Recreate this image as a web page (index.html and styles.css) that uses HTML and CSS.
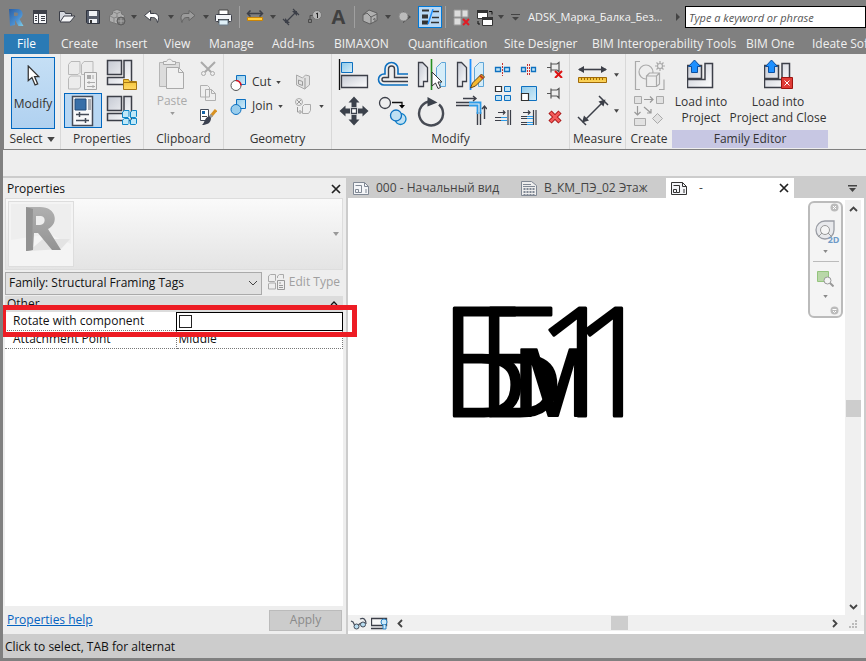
FILE: index.html
```
<!DOCTYPE html>
<html lang="en">
<head>
<meta charset="utf-8">
<title>ADSK_Марка_Балка_Без...</title>
<link rel="stylesheet" href="styles.css">
</head>
<body>
<svg class="defs" aria-hidden="true">
  <defs>
    <linearGradient id="steel" x1="0" y1="0" x2="1" y2="1"><stop offset="0" stop-color="#c5c9d3"/><stop offset="1" stop-color="#fff"/></linearGradient>
    <linearGradient id="sky" x1="0" y1="0" x2="1" y2="1"><stop offset="0" stop-color="#8fcaea"/><stop offset="1" stop-color="#d5edf9"/></linearGradient>
    <linearGradient id="rblue" x1="0" y1="0" x2="1" y2="1"><stop offset="0" stop-color="#2a5fa5"/><stop offset=".6" stop-color="#4b8fd0"/><stop offset="1" stop-color="#7fd0e8"/></linearGradient>
    <linearGradient id="rgray" x1="0" y1="0" x2="0" y2="1"><stop offset="0" stop-color="#b0b0b0"/><stop offset="1" stop-color="#929292"/></linearGradient>
    <linearGradient id="gold" x1="0" y1="0" x2="0" y2="1"><stop offset="0" stop-color="#f0c030"/><stop offset="1" stop-color="#ffd866"/></linearGradient>
    <symbol id="down" viewBox="0 0 6 4"><path d="M0 0h6L3 4z"/></symbol>
    <symbol id="sheet" viewBox="0 0 17 15"><path d="M.500 1.500h11l4 4v8H.500z" fill="#f4f5f8" stroke="currentColor"/><path d="M11.500 1.500v4h4M2.500 4.500h6v7M2.500 8.500h3v3h-3zM5.500 11.500h3M13 8v4" fill="none" stroke="currentColor"/></symbol>
    <symbol id="load" viewBox="688 60 28 30"><path d="M688.500 66.500h14v13h-14zM706 64.500h7.500v24h-25v-8H706z" fill="url(#steel)" stroke="#3c3f48" stroke-width="1.500"/><path d="M695.500 61l6 6.500h-3v6h-6v-6h-3z" fill="#1e90ff" stroke="#0b4fa0"/></symbol>
    <symbol id="cursor" viewBox="0 0 12 20"><path d="M1 1v14l3.500-3 3 7 2.500-1-3-7H11z" fill="#fff" stroke="#333" stroke-width="1.200"/></symbol>
  </defs>
</svg>
<div class="app">
  <header class="titlebar">
    <svg width="16" height="19" viewBox="9 7 16 19"><path d="M10 8h8c7 0 7 8 2.500 10l4 7h-5l-3.500-6v5l-5 1z" fill="url(#rblue)"/><path d="M15 11.500h2.500c2 0 2 3.500 0 3.500H15z" fill="#808080"/></svg>
    <button aria-label="Home"><svg width="16" height="16" viewBox="32 9 16 16"><path d="M33.500 10.500h13v13h-13z" fill="#f5f6f8" stroke="#3c3f48"/><path d="M33 10h14v4H33z" fill="#3c3f48"/><path d="M35 16.500h2m-2 2h2m-2 2h2M38.500 14v9M41 16.500h4m-4 2h4m-4 2h4" stroke="#3c3f48"/></svg></button>
    <button aria-label="Open"><svg width="18" height="14" viewBox="60 10 18 14"><path d="M61.500 21V11.500h5l1 2h6v3" fill="#d5d8df" stroke="#3c3f48"/><path d="M62 22l4-6h11l-5 6z" fill="#f5f6f8" stroke="#3c3f48"/></svg></button>
    <button aria-label="Save"><svg width="16" height="16" viewBox="85 8 16 16"><path d="M86.500 9.500h13v13h-12l-1-1z" fill="#555c6a" stroke="#30343e"/><path d="M89 10h8v5h-8zM89 18h8v4h-8z" fill="#eef1f5"/><path d="M90 19h2v3h-2z" fill="#333"/></svg></button>
    <button aria-label="Sync"><svg width="18" height="17" viewBox="108 8 18 17"><path d="M109.500 14.500l3-1.500v-3l4.500-1.500 4.500 1.500v3l3 1.500v5l-6 4-9-3z" fill="#aeaeae" stroke="#757575"/><path d="M112.500 10.500l4.500 2 4.500-2M117 12.500v4m-7-1.500l4 2 3-1 4 2 3-2M114 17v5" fill="none" stroke="#858585"/><circle cx="121" cy="20" r="4" fill="#777" stroke="#5d5d5d"/><path d="M118 20h6m-3-3v6" stroke="#aaa"/></svg></button>
    <svg class="dd" width="6" height="4"><use href="#down"/></svg>
    <button aria-label="Undo"><svg width="16" height="14" viewBox="145 10 16 14"><path d="M145.500 15.500l6-5v3h4c4 0 5 4 3 9-1-4-2.500-5-5-5h-2v3z" fill="#fff" stroke="#3c3f48"/></svg></button>
    <svg class="dd" width="6" height="4"><use href="#down"/></svg>
    <button aria-label="Redo"><svg width="16" height="14" viewBox="181 10 16 14"><path d="M196 15.500l-6-5v3h-4c-4 0-5 4-3 9 1-4 2.500-5 5-5h2v3z" fill="#9b9b9b" stroke="#646464"/></svg></button>
    <svg class="dd" width="6" height="4"><use href="#down"/></svg>
    <button aria-label="Print"><svg width="17" height="17" viewBox="217 9 17 17"><path d="M221 10h9v5h-9z" fill="#fff" stroke="#444"/><rect x="217.500" y="14.500" width="16" height="7" rx="1" fill="#f2f4f7" stroke="#3c3f48"/><path d="M220 19h11v4h-11z" fill="#333"/><path d="M221 20h9v5h-9z" fill="#dff0f8" stroke="#6b7a88"/></svg></button>
    <i class="sep"></i>
    <button aria-label="Measure"><svg width="18" height="14" viewBox="247 11 18 14"><path d="M249 14.500h14M251.500 11.500l-3 3 3 3m9-6l3 3-3 3" fill="none" stroke="#3c3f48" stroke-width="1.500"/><path d="M248.500 18.500h15v3h-15z" fill="#ffcb3c" stroke="#c98408"/></svg></button>
    <svg class="dd" width="6" height="4"><use href="#down"/></svg>
    <button aria-label="Dimension"><svg width="18" height="18" viewBox="283 8 18 18"><path d="M287 22l10-10M284 19l6 6M294 9l6 6" stroke="#3c3f48" stroke-width="1.200"/><path d="M286 23v-5l5 5zM298 11v5l-5-5z" fill="#3c3f48"/></svg></button>
    <button aria-label="Tag"><svg width="16" height="14" viewBox="308 10 16 14"><circle cx="318" cy="15" r="4.500" fill="#b5b5b5" stroke="#757575"/><path d="M313.500 15.500h-2.500v4M309.500 19.500h3v3h-3z" fill="none" stroke="#4c4c4c"/><path d="M317 14l1.500-1v5" fill="none" stroke="#222"/></svg></button>
    <button class="letter" aria-label="Text">A</button>
    <i class="sep"></i>
    <button aria-label="3D view"><svg width="16" height="16" viewBox="363 9 16 16"><path d="M364 14.500l6-4.500 8 3v7.500l-7 3.500-7-3z" fill="#b0b0b0" stroke="#606060"/><path d="M364 15l4-2 4 4v7m0-7l6-3M374 19.500l2-1v3" fill="none" stroke="#606060"/></svg></button>
    <svg class="dd" width="6" height="4"><use href="#down"/></svg>
    <svg width="14" height="14" viewBox="399 10 14 14"><path d="M404 11l8 6-8 6z" fill="#4a4a4a"/><circle cx="404.500" cy="16.500" r="4.500" fill="#bbb" stroke="#8a8a8a"/></svg>
    <button class="toggled" aria-label="Thin lines"><svg width="18" height="16" viewBox="422 9 18 16"><path d="M423 10.500h7" stroke="#333" stroke-width="2"/><path d="M423 16.500h6m-6 6h6" stroke="#333" stroke-width="4"/><path d="M434 11.500h6m-7 6h7m-8 5h8" stroke="#333" stroke-width="1.500"/><path d="M434 9l-5 15" stroke="#1e90ff" stroke-width="1.500"/></svg></button>
    <i class="sep"></i>
    <button aria-label="Close inactive"><svg width="17" height="17" viewBox="454 8 17 17"><path d="M455 9h7v7h-7zm8 0h6v7h-6zm-8 8h7v7h-7z" fill="#ddd" stroke="#999"/><path d="M464 18l6 6m0-6l-6 6" stroke="#e01b24" stroke-width="2"/></svg></button>
    <button aria-label="Switch windows"><svg width="17" height="17" viewBox="478 8 17 17"><path d="M478.500 9.500h10v8h-10z" fill="#fff" stroke="#333"/><path d="M478 9h11v3h-11z" fill="#333"/><path d="M483.500 16.500h10v8h-10z" fill="#fff" stroke="#333"/><path d="M483 16h11v3h-11z" fill="#333"/><path d="M490 10.500h3v3M481 23h-2v-3" fill="none" stroke="#111"/></svg></button>
    <svg class="dd" width="6" height="4"><use href="#down"/></svg>
    <svg class="dd" width="9" height="8" viewBox="0 0 9 8"><path d="M0 1h9v1H0zM1 4h7L4.500 7.500z"/></svg>
    <span class="doc">ADSK_Марка_Балка_Без...</span>
    <svg class="dd" width="4" height="8" viewBox="0 0 4 8"><path d="M0 0l4 4-4 4z"/></svg>
    <input class="search" type="text" placeholder="Type a keyword or phrase" aria-label="Search">
  </header>

  <nav class="tabs">
    <a class="file" href="#">File</a><a href="#">Create</a><a href="#">Insert</a><a href="#">View</a><a href="#">Manage</a><a href="#">Add-Ins</a><a href="#">BIMAXON</a><a href="#">Quantification</a><a href="#">Site Designer</a><a href="#">BIM Interoperability Tools</a><a href="#">BIM One</a><a href="#">Ideate Software</a>
  </nav>

  <section class="ribbon">
    <div class="panel">
      <div class="body"><button class="modify"><svg width="13" height="21"><use href="#cursor"/></svg>Modify</button></div>
      <h2>Select <svg class="dd" width="8" height="5" viewBox="0 0 6 4"><path d="M0 0h6L3 4z"/></svg></h2>
    </div>
    <div class="panel">
      <div class="body pairs">
        <button aria-label="Type properties"><svg width="32" height="32" viewBox="66 58 32 32"><g fill="#ececec" stroke="#b9b9b9"><path d="M68.500 63.500l2.500-3h9v11l-2 2h-9.500zM81.500 63.500l2.500-3h9v11l-2 2h-9.500zM68.500 77.500l2-2.500h10v11l-2 2h-10z"/><path d="M84.500 71.500h12v17h-12z" fill="#f0f0f0" stroke="#a5a5a5"/></g><path d="M87 74h4v4h-4z" fill="#aaa"/><path d="M93 74v4M87 81.500h8m-8 4h8M89 80v3m4 1v3" stroke="#aaa"/></svg></button>
        <button aria-label="Family category"><svg width="32" height="32" viewBox="106 58 32 32"><path d="M107.500 59.500h14v14h-14zM124 59.500h7.500v24h-24v-7H124z" fill="url(#steel)" stroke="#3c3f48" stroke-width="1.500"/><path d="M123.500 88.500v-10h5l1 2h7v8z" fill="url(#gold)" stroke="#a87813"/><path d="M124 81.500h12" stroke="#a87813"/></svg></button>
        <button class="chosen" aria-label="Properties"><svg width="24" height="32" viewBox="70 94 24 32"><path d="M71.500 95.500h20v29h-20z" fill="#f8f9fb" stroke="#444b58" stroke-width="1.500"/><path d="M74 98h11v11H74z" fill="#386fa8" stroke="#234c7b"/><path d="M87 98h3v11h-3z" fill="#a9acb3"/><path d="M75 113.500h13m-13 6h13M78.500 111v5m6 1v5" stroke="#444b58" stroke-width="1.500"/></svg></button>
        <button aria-label="Family types"><svg width="32" height="32" viewBox="106 95 32 32"><path d="M107.500 96.500h14v14h-14zM124 96.500h7.500v24h-24v-7H124z" fill="url(#steel)" stroke="#3c3f48" stroke-width="1.500"/><path d="M122.500 112l2-1.500h4.500v6l-1 1h-5.500zM130.500 112l2-1.500h4v6l-1 1h-5zM122.500 120l2-1.500h4.500v5l-1 1h-5.500zM130.500 120l2-1.500h4v5l-1 1h-5z" fill="#bfe8f8" stroke="#0c86c8"/></svg></button>
      </div>
      <h2>Properties</h2>
    </div>
    <div class="panel">
      <div class="body clip">
        <button class="paste"><svg width="28" height="32" viewBox="158 59 28 32"><path d="M159.500 63.500h20v24h-20z" fill="#dcdcdc" stroke="#b5b5b5"/><path d="M163.500 65.500v-3h3c1-3 5-3 6 0h3v3z" fill="#ededed" stroke="#aaa"/><path d="M166.500 68.500h12l5 5v16h-17z" fill="#f0f0f0" stroke="#aaa"/><path d="M178.500 68.500v5h5" fill="none" stroke="#aaa"/></svg>Paste<svg class="dd" width="5" height="3"><use href="#down"/></svg></button>
        <div class="smalls">
          <button aria-label="Cut"><svg width="16" height="16" viewBox="201 61 16 16"><path d="M202 62l10 10M216 62l-10 10" stroke="#aaa" stroke-width="2"/><circle cx="204.500" cy="73.500" r="2" fill="none" stroke="#aaa"/><circle cx="213.500" cy="73.500" r="2" fill="none" stroke="#aaa"/></svg></button>
          <button aria-label="Copy"><svg width="16" height="16" viewBox="201 85 16 16"><path d="M201.500 85.500h7l2 2V97h-9zM206.500 89.500h6l4 4v7h-10z" fill="#eee" stroke="#b0b0b0"/><path d="M212.500 89.500v4h4" fill="none" stroke="#b0b0b0"/></svg></button>
          <button aria-label="Match type"><svg width="17" height="17" viewBox="201 109 17 17"><path d="M201.500 109.500h8v11h-8z" fill="#fff" stroke="#444b58"/><path d="M203 111h3v3h-3z" fill="#1764a5"/><path d="M203 116.500h5" stroke="#444"/><path d="M217 110l-5 6" stroke="#d89122" stroke-width="3"/><path d="M213 115l-3 3" stroke="#999" stroke-width="3"/><path d="M210 116l2 2c0 5-4 7-9 7 3-2 2-7 7-9z" fill="#3b4150"/></svg></button>
        </div>
      </div>
      <h2>Clipboard</h2>
    </div>
    <div class="panel">
      <div class="body geo">
        <button class="wide"><svg width="17" height="17" viewBox="230 73 17 17"><path d="M236.500 74.500h9v9h-9z" fill="url(#sky)" stroke="#0d70c0"/><circle cx="236" cy="84.500" r="5" fill="#fff" stroke="#555"/><path d="M236 79.500a5 5 0 0 1 5 5" fill="none" stroke="#e01020" stroke-width="1.500"/></svg>Cut<svg class="dd" width="5" height="3"><use href="#down"/></svg></button>
        <button class="cope" aria-label="Cope"><svg width="16" height="17" viewBox="296 73 16 17"><path d="M297.500 74l6 3 3-3 4 1v9l-5 4-8-4z" fill="#e2e2e2" stroke="#aaa"/><path d="M306 77v11M299.500 79l4 1.500v4l-4-1.500z" fill="none" stroke="#999"/></svg></button>
        <button class="wide"><svg width="17" height="17" viewBox="230 97 17 17"><path d="M236.500 98.500h9v9h-9z" fill="url(#sky)" stroke="#0d70c0"/><circle cx="236" cy="108.500" r="5" fill="#99cdec" stroke="#0d70c0"/></svg>Join<svg class="dd" width="5" height="3"><use href="#down"/></svg></button>
        <button class="walls" aria-label="Wall joins"><svg width="16" height="17" viewBox="296 97 16 17"><circle cx="300" cy="101" r="3.500" fill="none" stroke="#aaa"/><path d="M298 99l4 4m0-4l-4 4M298.500 106v5h3m-1-2l2 2-2 2" fill="none" stroke="#999"/><path d="M303.500 105.500l2-2h6v6l-2 3h-6z" fill="#eee" stroke="#aaa"/></svg><svg class="dd" width="5" height="3"><use href="#down"/></svg></button>
      </div>
      <h2>Geometry</h2>
    </div>
    <div class="panel">
      <div class="body mod">
        <div class="big">
          <button aria-label="Align"><svg width="32" height="32" viewBox="338 59 32 32"><path d="M339.500 59v31" stroke="#111" stroke-width="1.300"/><path d="M341.500 62.500h11v10h-11z" fill="url(#sky)" stroke="#0d70c0"/><path d="M341.500 75.500h26v12h-26z" fill="url(#steel)" stroke="#3c3f48" stroke-width="1.300"/></svg></button>
          <button aria-label="Offset"><svg width="32" height="32" viewBox="377 59 32 32"><path d="M408 74h-10v-5a6.500 6.500 0 0 0-13 0v5h-1a5.500 5.500 0 0 0 0 11h24" fill="none" stroke="#0d70c0" stroke-width="1.600"/><path d="M408 77.500h-13.500V69a3 3 0 0 0-6 0v8.500H384a2 2 0 0 0 0 4h24" fill="none" stroke="#3c3f48" stroke-width="1.400"/></svg></button>
          <button aria-label="Mirror pick axis"><svg width="32" height="32" viewBox="416 59 32 32"><path d="M418.500 62.500h4l5 5v14h-4v5h-5z" fill="url(#steel)" stroke="#3c3f48" stroke-width="1.300"/><path d="M445.500 62.500h-4l-5 5v14h4v5h5z" fill="#d5edf9" stroke="#5fa6d8"/><path d="M431.500 59v31" stroke="#279020" stroke-width="1.600"/><path d="M432 72v14l3.500-3 2.500 5.500 2.500-1-2.500-5.500h4z" fill="#fff" stroke="#333"/></svg></button>
          <button aria-label="Mirror draw axis"><svg width="32" height="32" viewBox="455 59 32 32"><path d="M457.500 62.500h4l5 5v14h-4v5h-5z" fill="url(#steel)" stroke="#3c3f48" stroke-width="1.300"/><path d="M483.500 62.500h-4l-5 5v14h4v5h5z" fill="#d5edf9" stroke="#5fa6d8"/><path d="M470.500 59v31" stroke="#1e90ff" stroke-width="1.800"/><path d="M470.500 88l2-5 9-9 3 3-9 9z" fill="#f5b82e" stroke="#5b431d"/><path d="M480 75.500l3 3" stroke="#c23b1d" stroke-width="2"/></svg></button>
          <button aria-label="Move"><svg width="32" height="32" viewBox="338 94 32 32"><path d="M354 95.500l5.500 6h-3v4.500h-5v-4.500h-3zM354 124.500l5.500-6h-3V114h-5v4.500h-3zM339.500 110l6-5.500v3h4.500v5h-4.500v3zM368.500 110l-6-5.500v3H358v5h4.500v3z" fill="#3b414b"/><path d="M351.500 107.500h5v5h-5z" fill="#fff" stroke="#3b414b" stroke-width="1.300"/></svg></button>
          <button aria-label="Copy element"><svg width="32" height="32" viewBox="377 94 32 32"><circle cx="385" cy="102" r="5.500" fill="#eee" stroke="#3c3f48" stroke-width="1.300"/><path d="M392 101.500h10v3" fill="none" stroke="#111" stroke-width="1.300"/><path d="M399 104h6l-3 3.500z"/><circle cx="400.500" cy="118" r="5.500" fill="#bfe0f3" stroke="#0d80c8" stroke-width="1.300"/><circle cx="396" cy="114.500" r="5.500" fill="#bfe0f3" stroke="#0d70c0" stroke-width="1.300"/></svg></button>
          <button aria-label="Rotate"><svg width="32" height="32" viewBox="416 94 32 32"><path d="M431 100.500a12 12 0 1 0 8 3" fill="none" stroke="#474b54" stroke-width="2.400"/><path d="M427.500 96l10 5.500-10 4z" fill="#3b414b"/></svg></button>
          <button aria-label="Trim corner"><svg width="32" height="32" viewBox="455 95 32 32"><path d="M456 102.500h13m-13 3h13M477.500 112v13m3-13v13" stroke="#3c3f48" stroke-width="1.400"/><path d="M469 102.500h11.500V114M469 105.500h8.500v8.500" fill="none" stroke="#2d9be8" stroke-width="1.800"/><path d="M463 98.500h13m-3-2.500l3 2.500-3 2.500M484.500 119v-13m-2.500 3l2.500-3 2.500 3" fill="none" stroke="#3c3f48" stroke-width="1.400"/></svg></button>
        </div>
        <div class="tiny">
          <button aria-label="Split"><svg width="18" height="16" viewBox="496 61 18 16"><path d="M497.500 67.500h5v4h-5zM506.500 67.500h5v4h-5z" fill="#bfe3f5" stroke="#0d70c0" stroke-width="1.300"/><path d="M504.500 63v13" stroke="#c23030" stroke-dasharray="2 1"/></svg></button>
          <button aria-label="Split with gap"><svg width="18" height="16" viewBox="521 61 18 16"><path d="M522.500 67.500h4v4h-4zM532.500 67.500h4v4h-4z" fill="#bfe3f5" stroke="#0d70c0" stroke-width="1.300"/><path d="M528.500 64v11m2-11v11" stroke="#c23030" stroke-dasharray="2 1"/></svg></button>
          <button aria-label="Unpin"><svg width="18" height="17" viewBox="547 60 18 17"><path d="M548 66.500h4m0-5v10m0-8.500h6l2-1.500v9.500l-2-2h-6" fill="none" stroke="#555" stroke-width="1.200"/><path d="M556 70l7 7m0-7l-7 7" stroke="#d11" stroke-width="2"/></svg></button>
          <button aria-label="Array"><svg width="18" height="17" viewBox="496 85 18 17"><path d="M497.500 86.500h6v5h-6z" fill="#fff" stroke="#333" stroke-width="1.200"/><path d="M506.500 86.500h6v5h-6zM497.500 95.500h6v5h-6zM506.500 95.500h6v5h-6z" fill="#bfe3f5" stroke="#0d70c0"/></svg></button>
          <button aria-label="Scale"><svg width="18" height="17" viewBox="521 85 18 17"><path d="M522.500 86.500h15v14h-15z" fill="url(#sky)" stroke="#0d70c0"/><path d="M522.500 93.500h7v7h-7z" fill="#fff" stroke="#333" stroke-width="1.200"/></svg></button>
          <button aria-label="Pin"><svg width="18" height="16" viewBox="547 85 18 16"><path d="M548 93.500h4m0-5v10m0-8.500h6l2-1.500v9.500l-2-2h-6" fill="none" stroke="#555" stroke-width="1.200"/></svg></button>
          <button aria-label="Trim single"><svg width="18" height="17" viewBox="496 109 18 17"><path d="M500 112.500h7m-2-2l2 2-2 2M510 110v15m2.500-15v15M497 117.500h7m-7 3h7" fill="none" stroke="#3c3f48" stroke-width="1.200"/><path d="M503 117.500h6m-6 3h6" stroke="#2d9be8"/></svg></button>
          <button aria-label="Trim multiple"><svg width="18" height="17" viewBox="521 109 18 17"><path d="M524 112.500h7m-2-2l2 2-2 2M534.500 110v15m2.500-15v15M522 116.500h6m-6 2h6m-6 4h6m-6 2h6" fill="none" stroke="#3c3f48" stroke-width="1.200"/><path d="M528 116.500h6m-6 2h6m-6 4h6m-6 2h6" stroke="#2d9be8"/></svg></button>
          <button aria-label="Delete"><svg width="16" height="16" viewBox="547 109 16 16"><path d="M550 112l10 10m0-10l-10 10" stroke="#a51212" stroke-width="4.500"/><path d="M550.500 112.500l9 9m0-9l-9 9" stroke="#f35b5b" stroke-width="2.500"/></svg></button>
        </div>
      </div>
      <h2>Modify</h2>
    </div>
    <div class="panel">
      <div class="body meas">
        <button aria-label="Measure distance"><svg width="32" height="30" viewBox="576 60 32 30"><path d="M578 69.500h27" stroke="#3c3f48" stroke-width="1.600"/><path d="M577 69.500l6-3.500v7zM606 69.500l-6-3.500v7z" fill="#3c3f48"/><path d="M577.500 77.500h28v5h-28z" fill="url(#gold)" stroke="#a06a08"/><path d="M580.500 78v2m3-2v2m3-2v2m3-2v2m3-2v2m3-2v2m3-2v2m3-2v2" stroke="#a06a08"/></svg><svg class="dd" width="5" height="4"><use href="#down"/></svg></button>
        <button aria-label="Aligned dimension"><svg width="32" height="32" viewBox="576 94 32 32"><path d="M583 120l20-20M577 116l8 8M598 95l9 9" stroke="#3c3f48" stroke-width="1.500"/><path d="M581 121.500l2-7 5 5zM604.500 98.500l-7 2 5 5z" fill="#3c3f48"/></svg><svg class="dd" width="5" height="4"><use href="#down"/></svg></button>
      </div>
      <h2>Measure</h2>
    </div>
    <div class="panel">
      <div class="body meas">
        <button aria-label="Create group"><svg width="32" height="32" viewBox="631 58 32 32"><g fill="none" stroke="#aaa" stroke-width="1.200"><path d="M638 60.500h-4.500v28h4.500M657 88.500h5v-10"/><circle cx="644" cy="71" r="7"/><path d="M644.500 75l3-3h10v11l-3 2.500h-10zM644.500 75h10v10m0-10l3-3" fill="#eee"/><circle cx="658" cy="65" r="2.500"/><path d="M658 60v2m0 6v2m-5-5h2m6 0h2m-8.500-3.500l1.500 1.500m4 4l1.500 1.500m0-7l-1.500 1.500m-4 4l-1.500 1.500"/></g></svg></button>
        <button aria-label="Create similar"><svg width="32" height="32" viewBox="631 94 32 32"><path d="M632.500 95.500h7v7h-7zM654.500 95.500h7v7h-7zM632.500 117.500h11v7h-11zM655.500 112.500l5 5-5 5-5-5z" fill="#e2e2e2" stroke="#aaa"/><path d="M642 98.500h9m-3-3l3 3-3 3M635.500 105v9m-3-3l3 3 3-3M642 106l7 6m-4 0h4v-4" fill="none" stroke="#999" stroke-width="1.200"/></svg></button>
      </div>
      <h2>Create</h2>
    </div>
    <div class="panel family">
      <div class="body loads">
        <button><svg width="28" height="30"><use href="#load"/></svg><span>Load into</span><span>Project</span></button>
        <button><svg width="32" height="30" viewBox="686 60 32 30"><use href="#load" x="688" y="60" width="28" height="30"/><path d="M705.500 78.500h11v11h-11z" fill="#df3b36" stroke="#9e1510"/><path d="M708.500 81.500l5 5m0-5l-5 5" stroke="#fff"/></svg><span>Load into</span><span>Project and Close</span></button>
      </div>
      <h2>Family Editor</h2>
    </div>
  </section>
  <div class="options"></div>

  <main class="work">
    <aside class="props">
      <div class="phead"><h3>Properties</h3><button aria-label="Close palette"><svg width="10" height="10" viewBox="0 0 10 10"><path d="M1 1l8 8M9 1L1 9" stroke="#222" stroke-width="1.700"/></svg></button></div>
      <div class="preview">
        <div class="thumb"><svg width="60" height="60" viewBox="11 204 60 60"><path d="M11 204h60v60H11z" fill="#eee"/><path d="M11 240l38-6 22 10v20H11z" fill="#f4f4f4"/><path d="M29 251l14-12h27l-9 10z" fill="#e3e3e3"/><path d="M26 207h14c17 0 19 17 8 22l13 21h-9l-14-17h-4l-1 17-7 1z" fill="url(#rgray)"/><path d="M36 216h5c5 0 5 9-1 9h-4z" fill="#eee"/><path d="M26 207l7 2-1 41-6 1z" fill="#929292"/></svg></div>
        <svg class="dd" width="8" height="4"><use href="#down"/></svg>
      </div>
      <div class="typerow">
        <select aria-label="Family type"><option>Family: Structural Framing Tags</option></select>
        <button class="edit"><svg width="17" height="16" viewBox="268 273 17 16"><path d="M268.500 275l2-1.500h5v6l-1 1h-6zM277.500 277v-2l2-1.500h4v4M268.500 283l1-1h6v6h-7z" fill="none" stroke="#aaa"/><path d="M277.500 279.500h7v9h-7zM279 282h2m-2 2.500h4m-4 2h4" fill="#eee" stroke="#999"/></svg>Edit Type</button>
      </div>
      <table class="grid">
        <thead><tr><th>Other</th><th class="fold"><svg width="8" height="8" viewBox="0 0 8 8"><path d="M1 4l3-3 3 3M1 7.500l3-3 3 3" fill="none" stroke="#111" stroke-width="1.300"/></svg></th></tr></thead>
        <tbody>
          <tr><td><label for="rot">Rotate with component</label></td><td class="active"><input id="rot" type="checkbox"></td></tr>
          <tr><td>Attachment Point</td><td>Middle</td></tr>
        </tbody>
      </table>
      <div class="mark"></div>
      <div class="blank"></div>
      <div class="pfoot"><a href="#">Properties help</a><button disabled>Apply</button></div>
    </aside>

    <section class="views">
      <div class="vtabs">
        <button><svg width="17" height="15"><use href="#sheet"/></svg>000 - Начальный вид</button>
        <button><svg width="17" height="15" viewBox="0 0 17 15"><path d="M.500 .500h10l5 4v10H.500z" fill="#eee" stroke="currentColor"/><path d="M2 3.500h8M2 5.500h12" stroke="currentColor"/><path d="M3.500 7v7m3-7v7m3-7v7m3-7v7" stroke="currentColor" stroke-width="2" stroke-dasharray="2 1"/></svg>В_КМ_ПЭ_02 Этаж</button>
        <div class="current"><svg width="17" height="15"><use href="#sheet"/></svg><span>-</span><button aria-label="Close view"><svg width="10" height="10" viewBox="0 0 10 10"><path d="M1 1l8 8M9 1L1 9" stroke="#222" stroke-width="1.700"/></svg></button></div>
        <svg class="dd list" width="9" height="7" viewBox="0 0 9 7"><path d="M0 0h9v1.500H0zM1 3h7L4.500 7z"/></svg>
      </div>
      <div class="sheet">
        <div class="canvas">
          <svg class="tag" width="180" height="130" viewBox="444 298 180 130"><text x="439 475" y="416">ББ</text><text class="low" x="515" y="416">м</text><text x="535 571" y="416">11</text></svg>
          <div class="nav">
            <button class="right" aria-label="Close navigation"><svg width="9" height="9" viewBox="0 0 9 9"><circle cx="4.500" cy="4.500" r="4" fill="#bbb"/><path d="M3 3l3 3m0-3L3 6" stroke="#fff"/></svg></button>
            <button aria-label="Steering wheel" class="wheel"><svg width="22" height="22" viewBox="0 0 22 22"><path d="M10 1h9v9a9 9 0 1 1-9-9z" fill="#e8e9ec" stroke="#9a9da5" stroke-width="1.300"/><circle cx="10" cy="10" r="4.500" fill="#f5f5f5" stroke="#999"/><path d="M3 17l4-4m6 0l4 4" stroke="#999"/></svg><b>2D</b></button>
            <svg class="dd" width="5" height="3"><use href="#down"/></svg>
            <hr>
            <button aria-label="Zoom region"><svg width="17" height="17" viewBox="0 0 17 17"><path d="M.500 1.500h11v10H.500z" fill="#b9d7a8" stroke="#94c47d"/><circle cx="10.500" cy="10.500" r="3.500" fill="#f3f3f3" stroke="#999"/><path d="M13 13l3.500 3.500" stroke="#999" stroke-width="2"/></svg></button>
            <svg class="dd" width="5" height="3"><use href="#down"/></svg>
            <button class="right" aria-label="Navigation options"><svg width="9" height="9" viewBox="0 0 9 9"><circle cx="4.500" cy="4.500" r="4" fill="#bbb"/><path d="M2.500 3.500h4M3 5l1.500 1.500L6 5" fill="none" stroke="#fff"/></svg></button>
          </div>
        </div>
        <div class="vbar"><svg width="9" height="6" viewBox="0 0 9 6"><path d="M1 5l3.500-3.500L8 5" fill="none" stroke="#444" stroke-width="1.800"/></svg><i></i><svg width="9" height="6" viewBox="0 0 9 6"><path d="M1 1l3.500 3.500L8 1" fill="none" stroke="#444" stroke-width="1.800"/></svg></div>
      </div>
      <div class="hbar">
        <svg width="17" height="13" viewBox="0 0 17 13"><path d="M1 4l2 1 2 4M8 9c1-2 2-3 4-3M10 2c4-2 6 1 6 5" fill="none" stroke="#444b58" stroke-width="1.200"/><circle cx="6.500" cy="9.500" r="2.500" fill="#b7dcf0" stroke="#444b58"/><circle cx="13" cy="7.500" r="2.500" fill="#b7dcf0" stroke="#444b58"/></svg>
        <svg width="17" height="13" viewBox="0 0 17 13"><path d="M.500 1.500h15v7H.500zM0 11.500h12" fill="#f7f7f7" stroke="#3c3f48" stroke-width="1.300"/><circle cx="13" cy="5" r="3" fill="#cdeafa" stroke="#2b83c4"/><path d="M12 8v4h3V8" fill="#cdeafa" stroke="#2b83c4"/></svg>
        <svg width="6" height="9" viewBox="0 0 6 9"><path d="M5 1L1.500 4.500 5 8" fill="none" stroke="#444" stroke-width="1.800"/></svg>
        <i></i>
        <svg width="6" height="9" viewBox="0 0 6 9"><path d="M1 1l3.500 3.500L1 8" fill="none" stroke="#444" stroke-width="1.800"/></svg>
        <svg width="9" height="9" viewBox="0 0 9 9"><path d="M7 1h2v2H7zM7 4h2v2H7zM4 4h2v2H4zM7 7h2v2H7zM4 7h2v2H4zM1 7h2v2H1z" fill="#bbb"/></svg>
      </div>
    </section>
  </main>
  <footer class="status">Click to select, TAB for alternat</footer>
</div>
</body>
</html>
```
FILE: styles.css
```
* { box-sizing: border-box; }
body {
  margin: 0;
  font: 12px/16px "Open Sans", "Noto Sans", sans-serif;
  color: #111;
  background: #808080;
  overflow: hidden;
}
button, input, select { font: inherit; color: inherit; margin: 0; }
button { background: none; border: 0; padding: 0; display: flex; align-items: center; justify-content: center; white-space: nowrap; }
h2, h3 { margin: 0; font-size: 12px; font-weight: 400; }
svg { display: block; flex: none; }
a { color: inherit; text-decoration: none; }
.defs { position: absolute; width: 0; height: 0; }
.dd { fill: #444; }

.app {
  display: grid;
  grid-template-rows: 34px 20px 95px 29px 1fr 24px;
  height: 100vh;
  border-bottom: 3px solid #808080;
  border-left: 3px solid #808080;
  overflow: hidden;
}

.titlebar {
  display: grid;
  grid-template-columns: 26px 22px 32px 20px 27px 8px 28px 9px 26px 9px 27px 5px 26px 9px 27px 22px 25px 6px 26px 9px 26px 24px 7px 24px 24px 8px 20px 146px 14px 1fr;
  align-items: center;
  justify-items: center;
  min-width: 0;
}
.titlebar .sep { width: 1px; height: 22px; background: #a0a0a0; }
.titlebar .letter { font-size: 20px; font-weight: 700; color: #404040; }
.titlebar .toggled { width: 24px; height: 22px; border: 1px solid #0078d7; background: #b8d8f5; }
.titlebar .doc { color: #f4f4f4; justify-self: start; padding-left: 3px; white-space: nowrap; font-size: 11px; }
.search { width: 100%; height: 22px; border: 1px solid #000; background: #fff; padding: 0 3px; font-size: 11px; font-style: italic; }
.search::placeholder { color: #555; opacity: 1; }

.tabs {
  display: grid;
  grid-template-columns: 57px 54px 49px 45px 63px 62px 74px 96px 88px 154px 66px 1fr;
  margin-left: 1px;
  line-height: 20px;
  color: #f0f0f0;
  white-space: nowrap;
  overflow: hidden;
}
.tabs .file { width: 45px; text-align: center; background: #2a7ab5; color: #fff; }

.ribbon {
  display: grid;
  grid-template-columns: 57px 83px 80px 108px 238px 56px 46px 156px;
  margin-left: 1px;
  background: #eee;
  color: #333;
  overflow: hidden;
}
.panel { display: grid; grid-template-rows: 76px 18px; border-right: 1px solid #d8d8d8; }
.panel:nth-last-child(-n+2) { border: 0; }
.panel h2 { display: flex; gap: 4px; align-items: center; justify-content: center; line-height: 18px; }
.body { display: flex; padding-top: 3px; }
.modify { flex-direction: column; justify-content: flex-start; gap: 10px; width: 44px; height: 72px; margin-left: 7px; padding-top: 7px; border: 1px solid #0067c0; background: linear-gradient(#c5dff5, #b0d1f0); }
.pairs { display: grid; grid-template: 36px 36px / 42px 38px; }
.pairs .chosen { border: 1px solid #0067c0; background: #b8d7f3; width: 38px; height: 35px; margin-left: 3px; }
.clip { gap: 10px; padding-left: 12px; color: #aaa; }
.paste { flex-direction: column; justify-content: flex-start; gap: 3px; width: 32px; padding-top: 1px; }
.paste .dd { fill: #999; }
.smalls { display: grid; grid-template-rows: 24px 24px 24px; width: 20px; }
.geo { display: grid; grid-template: 24px 24px / 65px 30px; padding: 16px 0 0 6px; }
.geo button { justify-content: flex-start; }
.wide { gap: 5px; }
.walls { gap: 8px; }
.mod { padding-left: 2px; }
.big { display: grid; grid-template: 36px 36px / repeat(4, 39px); }
.tiny { display: grid; grid-template: 24px 24px 24px / repeat(3, 26px); }
.meas { flex-direction: column; align-items: center; }
.meas button { height: 36px; gap: 5px; }
.loads { display: grid; grid-template-columns: 58px 96px; }
.loads button { flex-direction: column; justify-content: flex-start; padding-top: 2px; }
.loads svg { margin-bottom: 5px; }
.loads span { line-height: 16px; }
.family h2 { background: #c7c7e3; }

.options { background: #eee; border-top: 1px solid #808080; border-bottom: 2px solid #ccc; }

.work { display: grid; grid-template-columns: 343px 1fr; min-height: 0; background: #eee; }
.props { position: relative; display: flex; flex-direction: column; padding: 0 3px 0 2px; }
.phead { display: flex; justify-content: space-between; align-items: center; height: 20px; padding: 2px 2px 0; }
.preview { display: flex; justify-content: space-between; align-items: center; height: 72px; padding: 2px; border: 1px solid #ddd; background: linear-gradient(#fafafa, #e4e4e4); }
.preview .dd { fill: #999; }
.thumb { border: 1px solid #ddd; padding: 2px; background: #f4f4f4; }
.typerow { display: flex; justify-content: space-between; align-items: center; height: 26px; }
.typerow select {
  width: 257px; height: 23px; border: 1px solid #aaa; border-radius: 0; padding: 0 3px; appearance: none;
  background: #e1e1e1 url("data:image/svg+xml,%3Csvg xmlns='http://www.w3.org/2000/svg' width='10' height='6'%3E%3Cpath d='M1 1l4 4 4-4' fill='none' stroke='%23444'/%3E%3C/svg%3E") no-repeat right 3px center;
}
.edit { gap: 4px; color: #a0a0a0; padding: 0 3px 3px 0; }
.grid { width: 100%; table-layout: fixed; border-collapse: collapse; background: #fff; }
.grid th { height: 16px; padding: 0 2px; background: #dcdcdc; text-align: left; font-weight: 400; line-height: 16px; }
.grid th:first-child { width: 171px; }
.grid .fold svg { margin: 2px 3px 0 auto; }
.grid td { height: 18px; padding: 0 0 0 8px; line-height: 16px; border-bottom: 1px dotted #777; border-right: 1px dotted #777; }
.grid td + td { padding-left: 2px; }
.grid .active { border: 1px solid #000; }
.grid input { display: block; appearance: none; width: 13px; height: 13px; border: 1px solid #222; background: #fff; }
.mark { position: absolute; z-index: 2; left: -2px; right: -11px; top: 127px; height: 32px; border: 5px solid #ed1c24; }
.blank { flex: 1; background: #fff; }
.pfoot { display: flex; justify-content: space-between; align-items: center; height: 28px; padding: 0 1px 0 2px; }
.pfoot a { color: #0563c1; text-decoration: underline; }
.pfoot button { width: 73px; height: 21px; background: #ccc; border: 1px solid #bbb; color: #8a8a8a; }

.views { display: flex; flex-direction: column; min-width: 0; border-left: 2px solid #ccc; border-right: 2px solid #ccc; background: #fff; }
.vtabs { display: grid; grid-template-columns: 168px 150px 128px 1fr; height: 20px; background: #ccc; color: #444; }
.vtabs button { justify-content: flex-start; gap: 6px; padding-left: 5px; }
.vtabs svg { color: #808894; }
.current { display: grid; grid-template-columns: 28px 1fr 10px; align-items: center; padding: 0 5px; background: #fff; }
.vtabs .current button { padding: 0; }
.vtabs .current svg { color: #333; }
.list { justify-self: end; align-self: center; margin-right: 7px; }
.sheet { flex: 1; display: flex; min-height: 0; }
.canvas { flex: 1; position: relative; min-width: 0; }
.tag { position: absolute; left: 96px; top: 100px; overflow: visible; }
.tag text { font: 300 152px "Open Sans", sans-serif; fill: #000; stroke: #000; stroke-width: 3; stroke-linejoin: round; }
.tag .low { font: 126px "Liberation Mono", monospace; stroke-width: 2; }
.nav { position: absolute; right: 2px; top: 3px; width: 35px; height: 117px; border: 2px solid #bbb; border-radius: 6px; background: #f4f4f4; display: flex; flex-direction: column; align-items: center; justify-content: space-between; padding: 0 2px 1px; }
.nav .right { align-self: flex-end; }
.nav hr { width: 26px; margin: 0; border: 0; border-top: 1px solid #bbb; }
.nav .dd { fill: #888; }
.wheel { position: relative; }
.wheel b { position: absolute; right: -3px; bottom: -3px; font-size: 9px; line-height: 10px; color: #6f9bc8; }
.vbar { width: 16px; margin: 2px 3px 0 0; background: #f0f0f0; display: grid; grid-template-rows: 18px 1fr 16px; justify-items: center; align-items: center; }
.vbar i { width: 15px; height: 17px; background: #cdcdcd; }
.hbar { display: grid; grid-template-columns: 21px 21px 20px 1fr 11px 24px; align-items: center; height: 16px; margin-bottom: 3px; background: #f0f0f0; justify-items: center; }
.hbar i { width: 17px; height: 14px; background: #cdcdcd; }

.status { background: #ccc; padding-left: 2px; line-height: 25px; }
```
